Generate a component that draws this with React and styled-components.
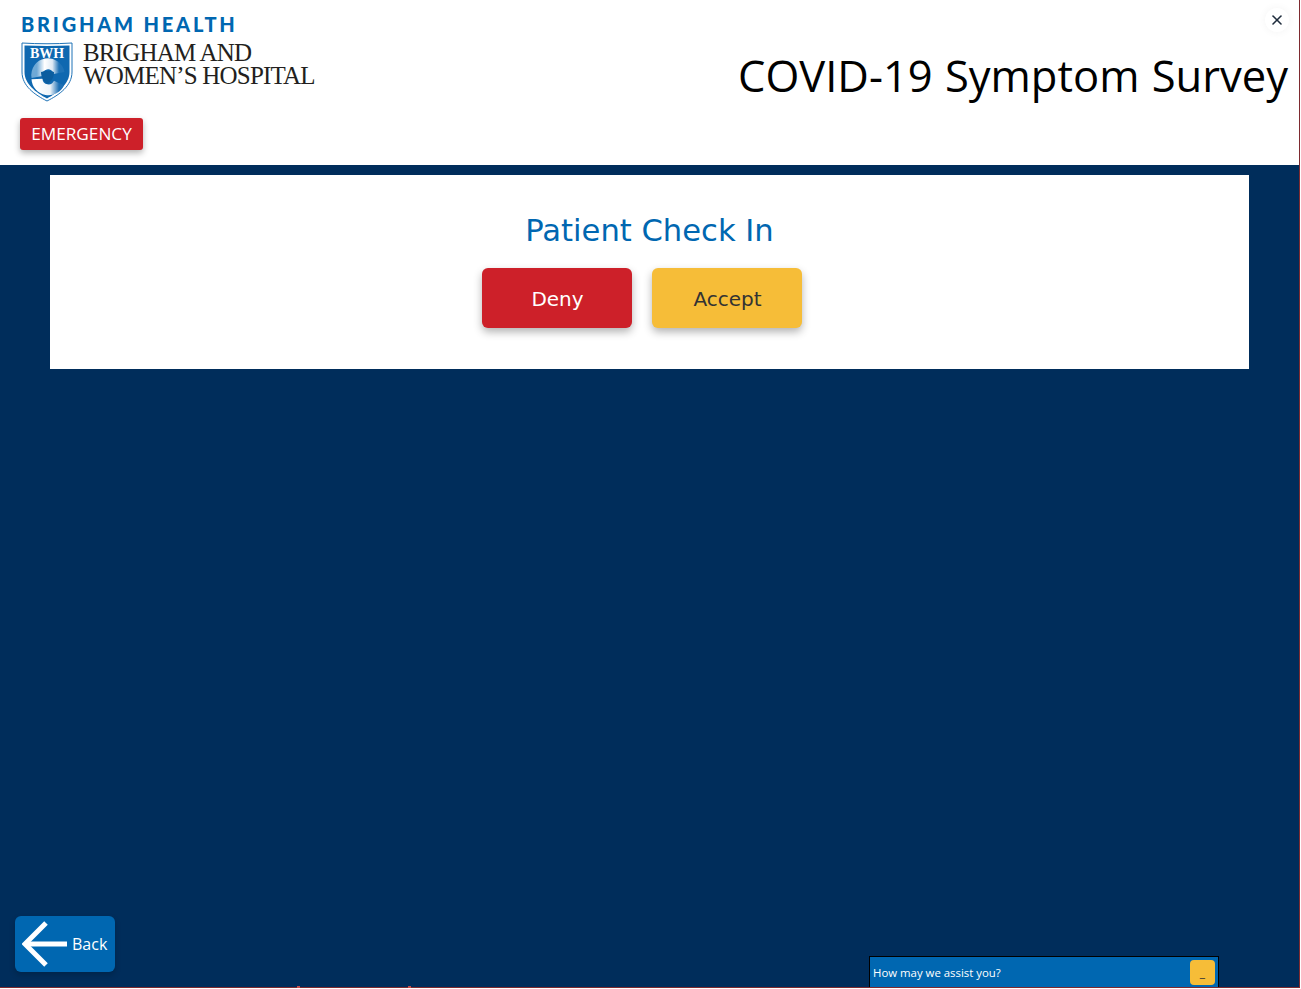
import React from "react";
import styled, { createGlobalStyle } from "styled-components";
import { X } from "lucide-react";

const GlobalStyle = createGlobalStyle`
  html, body {
    margin: 0;
    padding: 0;
    background: #fff;
  }
  body {
    font-family: "Open Sans", sans-serif;
  }
`;

const Shield = () => (
  <svg width="52" height="60" viewBox="0 0 52 60">
    <defs>
      <linearGradient id="topBand" x1="0" y1="0" x2="1" y2="0">
        <stop offset="0" stopColor="#6fa9d6" />
        <stop offset="0.35" stopColor="#ffffff" />
        <stop offset="0.7" stopColor="#dfeaf4" />
        <stop offset="1" stopColor="#1f72b6" />
      </linearGradient>
      <linearGradient id="lowBand" x1="0" y1="0" x2="1" y2="0">
        <stop offset="0" stopColor="#ffffff" />
        <stop offset="0.6" stopColor="#eef4f9" />
        <stop offset="1" stopColor="#1c6fb4" />
      </linearGradient>
    </defs>
    <path d="M1 1C17 2 35 2 51 1V30C51 44 38 53 26 59C14 53 1 44 1 30Z" fill="#fff" stroke="#1f73b7" strokeWidth="1" />
    <path d="M3.5 3.5C18 4 34 4 48.500 3.500V30C48.500 42 37 50.500 26 56.500C15 50.500 3.500 42 3.500 30Z" fill="#0f68b0" />
    <path d="M16 35A11 11 0 0 1 38 31" fill="none" stroke="url(#topBand)" strokeWidth="11" />
    <path d="M16 37A11.500 11.500 0 0 0 38 41" fill="none" stroke="url(#lowBand)" strokeWidth="11" />
    <path d="M20 30C23 28.500 30 28.500 33 30C33 35.500 30 40 26.500 42C23 40 20 35.500 20 30Z" fill="#0b5d9f" />
    <text x="26" y="16" textAnchor="middle" fontFamily="'Liberation Serif', serif" fontWeight="700" fontSize="14" fill="#fff">BWH</text>
  </svg>
);

const BackArrow = () => (
  <svg width="46" height="46" viewBox="0 0 46 46" fill="none" stroke="#fff" strokeWidth="5">
    <path d="M3 23H45" />
    <path d="M24 2L3 23L24 44" />
  </svg>
);

const App = () => (
  <Page>
    <GlobalStyle />
    <Header>
      <Brand>
        <BrandLine>BRIGHAM HEALTH</BrandLine>
        <HospitalRow>
          <Shield />
          <HospitalName>
            <span>BRIGHAM AND</span>
            <span>WOMEN’S HOSPITAL</span>
          </HospitalName>
        </HospitalRow>
        <EmergencyBtn>EMERGENCY</EmergencyBtn>
      </Brand>
      <Title>COVID-19 Symptom Survey</Title>
      <CloseBtn>
        <X size={16} strokeWidth={2.4} />
      </CloseBtn>
    </Header>
    <Main>
      <Card>
        <CardTitle>Patient Check In</CardTitle>
        <Actions>
          <ActionBtn $bg="#cd2029" $fg="#ffffff">Deny</ActionBtn>
          <ActionBtn $bg="#f6bd38" $fg="#333333">Accept</ActionBtn>
        </Actions>
      </Card>
      <Footer>
        <BackBtn>
          <BackArrow />
          <span>Back</span>
        </BackBtn>
        <ChatBar>
          <ChatText>How may we assist you?</ChatText>
          <MinBtn>_</MinBtn>
        </ChatBar>
      </Footer>
    </Main>
    <EdgeTick $left={297} />
    <EdgeTick $left={408} />
  </Page>
);

export default App;

const Page = styled.div`
  position: relative;
  width: 1299px;
  height: 987px;
  display: flex;
  flex-direction: column;
  border-right: 1px solid #7e2a2f;
  border-bottom: 1px solid #7e2a2f;
`;

const EdgeTick = styled.div`
  position: absolute;
  left: ${(p) => p.$left}px;
  bottom: -1px;
  width: 3px;
  height: 2px;
  background: #c4504f;
`;

const Header = styled.header`
  position: relative;
  height: 165px;
  flex: none;
  display: flex;
  justify-content: space-between;
  background: #fff;
  padding: 14px 11px 0 20px;
  box-sizing: border-box;
`;

const Brand = styled.div`
  display: flex;
  flex-direction: column;
  align-items: flex-start;
`;

const BrandLine = styled.div`
  font-family: "Lato", sans-serif;
  font-weight: 900;
  font-size: 20px;
  line-height: 20px;
  letter-spacing: 2.8px;
  color: #0067b1;
  margin-left: 1px;
`;

const HospitalRow = styled.div`
  display: flex;
  align-items: flex-start;
  gap: 10px;
  margin-top: 8px;
  margin-left: 1px;
`;

const HospitalName = styled.div`
  display: flex;
  flex-direction: column;
  font-family: "Liberation Serif", serif;
  font-size: 25px;
  line-height: 23px;
  letter-spacing: -0.8px;
  color: #231f20;
  white-space: nowrap;
  margin-top: -1px;
`;

const EmergencyBtn = styled.button`
  margin-top: 16px;
  width: 123px;
  height: 32px;
  border: none;
  border-radius: 3px;
  padding: 0 0 2px;
  background: #cd2029;
  color: #fff;
  font-family: "Open Sans", sans-serif;
  font-size: 17.2px;
  box-shadow: 0 3px 6px rgba(0, 0, 0, 0.3);
`;

const Title = styled.h1`
  margin: 33px 0 0;
  font-family: "Open Sans", sans-serif;
  font-weight: 400;
  font-size: 43.5px;
  line-height: 58px;
  word-spacing: 1px;
  color: #000;
  white-space: nowrap;
`;

const CloseBtn = styled.button`
  position: absolute;
  top: 8px;
  right: 10px;
  width: 24px;
  height: 24px;
  padding: 0;
  border: none;
  border-radius: 50%;
  background: #fff;
  box-shadow: 0 0 8px rgba(0, 0, 0, 0.05);
  color: #1f2d3d;
  display: flex;
  align-items: center;
  justify-content: center;
`;

const Main = styled.main`
  flex: 1;
  display: flex;
  flex-direction: column;
  justify-content: space-between;
  background: #002d5b;
  padding: 10px 0 0;
  min-height: 0;
`;

const Card = styled.section`
  margin: 0 50px;
  height: 194px;
  box-sizing: border-box;
  background: #fff;
  display: flex;
  flex-direction: column;
  align-items: center;
  padding-top: 36px;
`;

const CardTitle = styled.h2`
  margin: 0;
  font-family: "DejaVu Sans", sans-serif;
  font-weight: 400;
  font-size: 30.6px;
  line-height: 40px;
  color: #0067b1;
`;

const Actions = styled.div`
  display: flex;
  gap: 20px;
  margin-top: 17px;
  margin-left: -16px;
`;

const ActionBtn = styled.button`
  width: 150px;
  height: 60px;
  padding: 2px 0 0 2px;
  border: none;
  border-radius: 6px;
  background: ${(p) => p.$bg};
  color: ${(p) => p.$fg};
  font-family: "DejaVu Sans", sans-serif;
  font-size: 20px;
  box-shadow: 0 4px 8px rgba(0, 0, 0, 0.3);
`;

const Footer = styled.div`
  display: flex;
  align-items: flex-end;
  justify-content: space-between;
  padding: 0 80px 0 15px;
`;

const BackBtn = styled.button`
  width: 100px;
  height: 56px;
  margin-bottom: 15px;
  padding: 0 0 0 7px;
  border: none;
  border-radius: 6px;
  background: #0067b1;
  color: #fff;
  display: flex;
  align-items: center;
  font-family: "Open Sans", sans-serif;
  font-size: 16px;
  box-shadow: 0 3px 6px rgba(0, 0, 0, 0.2);
  span {
    margin-left: 4px;
  }
`;

const ChatBar = styled.div`
  width: 350px;
  height: 31px;
  box-sizing: border-box;
  border: 1px solid #000;
  border-bottom: none;
  background: #0067b1;
  display: flex;
  align-items: flex-start;
  justify-content: space-between;
  padding: 3px 3px 0 3px;
`;

const ChatText = styled.span`
  color: #fff;
  font-family: "Open Sans", sans-serif;
  font-size: 11.4px;
  line-height: 26px;
`;

const MinBtn = styled.button`
  width: 25px;
  height: 25px;
  padding: 0;
  border: none;
  border-radius: 4px;
  background: #f6bd38;
  color: #333;
  font-family: "Open Sans", sans-serif;
  font-size: 12px;
`;
